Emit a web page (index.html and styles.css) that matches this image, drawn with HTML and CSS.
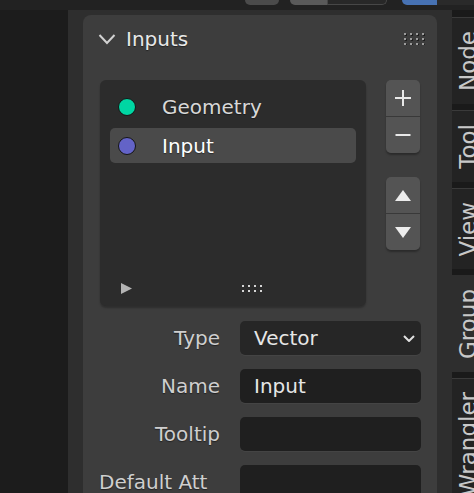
FILE: index.html
```html
<!DOCTYPE html>
<html>
<head>
<meta charset="utf-8">
<link rel="stylesheet" href="styles.css">
</head>
<body>
<div class="app">
  <div class="topbar">
    <span class="tb-btn"></span>
    <span class="tb-group"><span class="tb-light"></span><span class="tb-dark"></span></span>
    <span class="tb-group tb-group2"><span class="tb-blue"></span><span class="tb-dark2"></span></span>
  </div>
  <div class="main">
    <div class="canvas"></div>
    <div class="region">
      <div class="panel">
        <div class="panel-header">
          <svg class="chev" width="18" height="12" viewBox="0 0 18 12"><polyline points="1.5,2 9,10 16.5,2" fill="none" stroke="#d2d2d2" stroke-width="2"/></svg>
          <span class="panel-title">Inputs</span>
          <svg class="grip" width="21" height="12" viewBox="0 0 21 12">
            <g fill="#1e1e1e">
              <rect x="1" y="1" width="2" height="2"/><rect x="7" y="1" width="2" height="2"/><rect x="13" y="1" width="2" height="2"/><rect x="19" y="1" width="2" height="2"/>
              <rect x="1" y="6" width="2" height="2"/><rect x="7" y="6" width="2" height="2"/><rect x="13" y="6" width="2" height="2"/><rect x="19" y="6" width="2" height="2"/>
              <rect x="1" y="11" width="2" height="1"/><rect x="7" y="11" width="2" height="1"/><rect x="13" y="11" width="2" height="1"/><rect x="19" y="11" width="2" height="1"/>
            </g>
            <g fill="#9c9c9c">
              <rect x="0" y="0" width="2" height="2"/><rect x="6" y="0" width="2" height="2"/><rect x="12" y="0" width="2" height="2"/><rect x="18" y="0" width="2" height="2"/>
              <rect x="0" y="5" width="2" height="2"/><rect x="6" y="5" width="2" height="2"/><rect x="12" y="5" width="2" height="2"/><rect x="18" y="5" width="2" height="2"/>
              <rect x="0" y="10" width="2" height="2"/><rect x="6" y="10" width="2" height="2"/><rect x="12" y="10" width="2" height="2"/><rect x="18" y="10" width="2" height="2"/>
            </g>
          </svg>
        </div>
        <div class="panel-body">
          <div class="list-row">
            <div class="list">
              <div class="item"><span class="socket geo"></span><span>Geometry</span></div>
              <div class="item selected"><span class="socket vec"></span><span>Input</span></div>
              <div class="list-footer">
                <svg width="11" height="11" viewBox="0 0 11 11"><polygon points="0,0 11,5.5 0,11" fill="#b4b4b4"/></svg>
                <svg class="list-grip" width="20" height="7" viewBox="0 0 20 7">
                  <g fill="#d6d6d6">
                    <rect x="0" y="0" width="2" height="2"/><rect x="6" y="0" width="2" height="2"/><rect x="12" y="0" width="2" height="2"/><rect x="18" y="0" width="2" height="2"/>
                    <rect x="0" y="5" width="2" height="2"/><rect x="6" y="5" width="2" height="2"/><rect x="12" y="5" width="2" height="2"/><rect x="18" y="5" width="2" height="2"/>
                  </g>
                </svg>
              </div>
            </div>
            <div class="side-buttons">
              <div class="btn-group">
                <div class="sbtn"><svg width="18" height="18" viewBox="0 0 18 18"><path d="M9 1v16M1 9h16" stroke="#e8e8e8" stroke-width="2"/></svg></div>
                <div class="sbtn"><svg width="18" height="18" viewBox="0 0 18 18"><path d="M1.5 9h15" stroke="#e8e8e8" stroke-width="2"/></svg></div>
              </div>
              <div class="btn-group">
                <div class="sbtn"><svg width="16" height="11" viewBox="0 0 16 11"><polygon points="8,0 16,11 0,11" fill="#ececec"/></svg></div>
                <div class="sbtn"><svg width="16" height="11" viewBox="0 0 16 11"><polygon points="0,0 16,0 8,11" fill="#ececec"/></svg></div>
              </div>
            </div>
          </div>
          <div class="props">
            <div class="label">Type</div>
            <div class="field dropdown"><span>Vector</span><svg class="dd-chev" width="12" height="7" viewBox="0 0 12 7"><polyline points="1,1 6,6 11,1" fill="none" stroke="#e0e0e0" stroke-width="2"/></svg></div>
            <div class="label">Name</div>
            <div class="field">Input</div>
            <div class="label">Tooltip</div>
            <div class="field"></div>
            <div class="label label-left">Default Att</div>
            <div class="field"></div>
          </div>
        </div>
      </div>
    </div>
    <div class="tabs">
      <div class="tab"><span>Node</span></div>
      <div class="tab"><span>Tool</span></div>
      <div class="tab"><span>View</span></div>
      <div class="tab active"><span>Group</span></div>
      <div class="tab"><span>Wrangler</span></div>
    </div>
  </div>
</div>
</body>
</html>
```
FILE: styles.css
```css
html, body {
  margin: 0;
  padding: 0;
}
body {
  width: 474px;
  height: 493px;
  overflow: hidden;
  background: #1d1d1d;
  font-family: "DejaVu Sans", sans-serif;
  font-size: 20px;
}
.app {
  display: flex;
  flex-direction: column;
  height: 493px;
}
.topbar {
  height: 10px;
  flex: none;
  background: #222222;
  display: flex;
  align-items: flex-start;
  padding-left: 245px;
}
.tb-btn {
  width: 34px;
  height: 5px;
  background: #4b4b4b;
  border-radius: 0 0 5px 5px;
}
.tb-group {
  display: flex;
  margin-left: 11px;
  width: 97px;
  height: 5px;
}
.tb-light {
  width: 37px;
  background: #5a5a5a;
  border-radius: 0 0 0 5px;
}
.tb-dark {
  flex: 1;
  background: #282828;
  border: 1px solid #474747;
  border-top: none;
  border-radius: 0 0 5px 0;
}
.tb-group2 {
  margin-left: 15px;
  width: auto;
  flex: 1;
}
.tb-blue {
  width: 35px;
  background: #4772b3;
  border-radius: 0 0 0 5px;
}
.tb-dark2 {
  flex: 1;
  background: #2a2a2a;
}
.main {
  flex: 1;
  display: flex;
  min-height: 0;
}
.canvas {
  width: 68px;
  flex: none;
  background: #1c1c1c;
}
.region {
  flex: 1;
  background: #2e2e2e;
  padding: 5px 15px 0;
  overflow: hidden;
}
.panel {
  background: #3d3d3d;
  border-radius: 8px 8px 0 0;
  height: 520px;
}
.panel-header {
  height: 48px;
  display: flex;
  align-items: center;
  padding: 0 12px 0 15px;
}
.chev {
  margin-right: 10px;
}
.panel-title {
  flex: 1;
  color: #e8e8e8;
  text-shadow: 0 1px 1px rgba(0,0,0,0.45);
}
.panel-body {
  padding: 17px 17px 0;
}
.list-row {
  display: flex;
  gap: 20px;
}
.list {
  width: 266px;
  height: 226px;
  box-sizing: border-box;
  background: #2c2c2c;
  border-radius: 6px;
  padding: 9px 10px 8px;
  display: flex;
  flex-direction: column;
  gap: 4px;
  box-shadow: 0 2px 2px rgba(0,0,0,0.25);
}
.item {
  height: 35px;
  display: flex;
  align-items: center;
  padding-left: 8px;
  border-radius: 5px;
  color: #d8d8d8;
  text-shadow: 0 1px 1px rgba(0,0,0,0.4);
}
.item.selected {
  background: #4a4a4a;
  color: #ffffff;
}
.socket {
  width: 18px;
  height: 18px;
  box-sizing: border-box;
  border-radius: 50%;
  border: 1.5px solid #151515;
  margin-right: 26px;
  flex: none;
}
.socket.geo {
  background: #00d6a3;
}
.socket.vec {
  background: #6363c7;
}
.list-footer {
  margin-top: auto;
  height: 20px;
  display: flex;
  align-items: center;
  padding-left: 11px;
}
.list-grip {
  margin-left: 110px;
}
.side-buttons {
  width: 34px;
  display: flex;
  flex-direction: column;
  gap: 24px;
}
.btn-group {
  display: flex;
  flex-direction: column;
  border-radius: 5px;
  overflow: hidden;
  box-shadow: 0 2px 2px rgba(0,0,0,0.3);
}
.sbtn {
  height: 36px;
  background: #545454;
  display: flex;
  align-items: center;
  justify-content: center;
}
.sbtn + .sbtn {
  border-top: 1px solid #393939;
}
.props {
  margin-top: 15px;
  display: grid;
  grid-template-columns: 120px 181px;
  grid-auto-rows: 34px;
  column-gap: 20px;
  row-gap: 14px;
}
.label {
  align-self: center;
  text-align: right;
  white-space: nowrap;
  overflow: hidden;
  color: #cfcfcf;
  text-shadow: 0 1px 1px rgba(0,0,0,0.45);
}
.label-left {
  text-align: left;
  margin-left: -1px;
}
.field {
  background: #1f1f1f;
  border-radius: 5px;
  padding-left: 14px;
  display: flex;
  align-items: center;
  color: #e6e6e6;
  box-shadow: 0 1px 0 rgba(255,255,255,0.04);
}
.dropdown {
  background: #262626;
  padding-right: 6px;
}
.dd-chev {
  margin-left: auto;
}
.tabs {
  width: 22px;
  flex: none;
  background: #1a1a1a;
  padding-top: 7px;
  display: flex;
  flex-direction: column;
  gap: 6px;
}
.tab {
  background: #232323;
  border-top: 1px solid #3a3a3a;
  padding: 13px 0;
}
.tab.active {
  background: #2e2e2e;
  border-top-color: #2e2e2e;
}
.tab span {
  display: block;
  writing-mode: vertical-rl;
  transform: rotate(180deg);
  margin-left: 5px;
  font-size: 23px;
  line-height: 23px;
  color: #c8c8c8;
  white-space: nowrap;
}
```
